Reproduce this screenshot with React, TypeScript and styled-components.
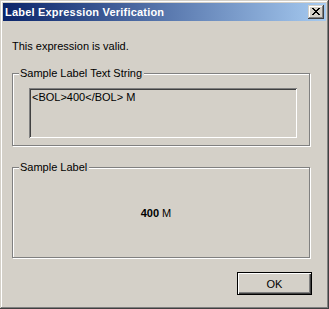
import styled, { createGlobalStyle } from "styled-components";

const Global = createGlobalStyle`
    html, body {
        margin: 0;
        padding: 0;
        background: #d4d0c8;
    }
    body {
        font-family: "Liberation Sans", Arial, sans-serif;
        font-size: 11px;
        color: #000;
    }
`;

const Window = styled.div`
    width: 329px;
    height: 309px;
    box-sizing: border-box;
    padding: 3px;
    background: #d4d0c8;
    box-shadow: inset -1px -1px 0 #404040, inset 1px 1px 0 #d4d0c8,
        inset -2px -2px 0 #808080, inset 2px 2px 0 #fff;
    display: flex;
    flex-direction: column;
`;

const TitleBar = styled.div`
    height: 18px;
    flex-shrink: 0;
    display: flex;
    align-items: center;
    justify-content: space-between;
    padding: 0 2px 0 2px;
    background: linear-gradient(to right, #0a246a, #a6caf0);
`;

const Title = styled.span`
    color: #fff;
    font-weight: bold;
    font-size: 11px;
    line-height: 13px;
    letter-spacing: 0.2px;
`;

const CloseButton = styled.button`
    width: 16px;
    height: 14px;
    padding: 0;
    border: none;
    background: #d4d0c8;
    box-shadow: inset -1px -1px 0 #404040, inset 1px 1px 0 #d4d0c8,
        inset -2px -2px 0 #808080, inset 2px 2px 0 #fff;
    display: flex;
    align-items: center;
    justify-content: center;
    svg {
        display: block;
        margin: 0 1px 1px 0;
    }
`;

const Body = styled.div`
    flex: 1;
    display: flex;
    flex-direction: column;
    align-items: flex-start;
    padding: 19px 14px 0 9px;
`;

const Message = styled.div`
    line-height: 13px;
`;

const GroupBox = styled.fieldset<{ $gap: number; $height: number }>`
    margin: ${props => props.$gap}px 0 0 0;
    width: 298px;
    height: ${props => props.$height}px;
    box-sizing: border-box;
    min-width: 0;
    border: 1px solid #808080;
    box-shadow: 1px 1px 0 #fff, inset 1px 1px 0 #fff;
    padding: 8px 12px 7px 16px;
    legend {
        margin-left: -10px;
        padding: 0 2px 0 1px;
        line-height: 13px;
        background: #d4d0c8;
    }
`;

const TextBox = styled.div`
    height: 50px;
    box-sizing: border-box;
    padding: 3px 3px 1px 3px;
    line-height: 13px;
    background: #d4d0c8;
    box-shadow: inset 1px 1px 0 #808080, inset -1px -1px 0 #fff,
        inset 2px 2px 0 #404040;
`;

const Preview = styled.div`
    height: 62px;
    display: flex;
    align-items: center;
    justify-content: center;
    padding-right: 14px;
    line-height: 13px;
    b {
        font-weight: bold;
    }
`;

const ButtonRow = styled.div`
    align-self: stretch;
    display: flex;
    justify-content: flex-end;
    margin-top: 14px;
`;

const Button = styled.button`
    width: 75px;
    height: 23px;
    padding: 0;
    font-family: "Liberation Sans", Arial, sans-serif;
    font-size: 11px;
    color: #000;
    background: #d4d0c8;
    border: 1px solid #000;
    box-shadow: inset 1px 1px 0 #fff, inset -1px -1px 0 #404040,
        inset -2px -2px 0 #808080;
`;

const App = () => {
    return (
        <Window>
            <Global />
            <TitleBar>
                <Title>Label Expression Verification</Title>
                <CloseButton>
                    <svg width="8" height="7" viewBox="0 0 8 7" shapeRendering="crispEdges">
                        <path d="M0 0h2v1h1v1h2V1h1V0h2v1H7v1H6v1H5v1h1v1h1v1h1v1H6V6H5V5H3v1H2v1H0V6h1V5h1V4h1V3H2V2H1V1H0z" fill="#000" />
                    </svg>
                </CloseButton>
            </TitleBar>
            <Body>
                <Message>This expression is valid.</Message>
                <GroupBox $gap={14} $height={79}>
                    <legend>Sample Label Text String</legend>
                    <TextBox>&lt;BOL&gt;400&lt;/BOL&gt; M</TextBox>
                </GroupBox>
                <GroupBox $gap={15} $height={97}>
                    <legend>Sample Label</legend>
                    <Preview>
                        <span><b>400</b> M</span>
                    </Preview>
                </GroupBox>
                <ButtonRow>
                    <Button>OK</Button>
                </ButtonRow>
            </Body>
        </Window>
    );
};

export default App;
